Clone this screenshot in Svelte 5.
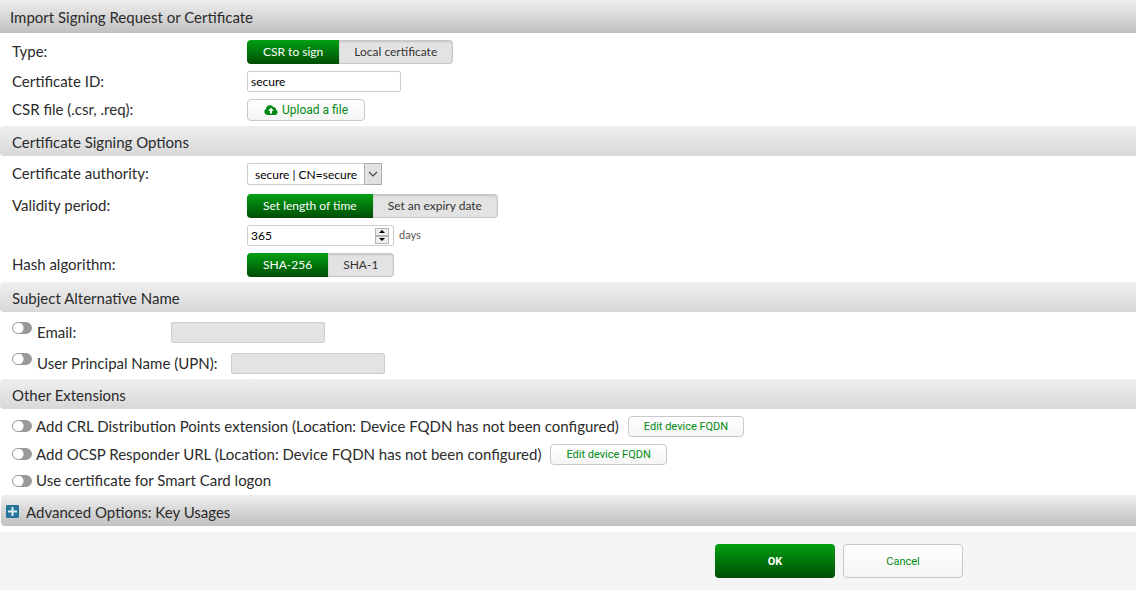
<script lang="ts">
  let type = $state('csr');
  let certId = $state('secure');
  let authority = $state('secure');
  let validity = $state('length');
  let days = $state(365);
  let hash = $state('SHA-256');

  let useEmail = $state(false);
  let useUpn = $state(false);
  let email = $state('');
  let upn = $state('');

  let crl = $state(false);
  let ocsp = $state(false);
  let smartCard = $state(false);
</script>

{#snippet segments(label: string, options: string[][], value: string, pick: (v: string) => void)}
  <div class="segmented" role="group" aria-label={label}>
    {#each options as [key, text]}
      <button type="button" class:active={value === key} aria-pressed={value === key} onclick={() => pick(key)}>
        {text}
      </button>
    {/each}
  </div>
{/snippet}

<form class="page" onsubmit={(e) => e.preventDefault()}>
  <h1 class="bar main">Import Signing Request or Certificate</h1>
  <div class="body">
    <div class="row">
      <span class="name">Type:</span>
      {@render segments('Type', [['csr', 'CSR to sign'], ['local', 'Local certificate']], type, (v) => (type = v))}
    </div>
    <div class="row">
      <label class="name" for="cert-id">Certificate ID:</label>
      <input id="cert-id" class="text" type="text" bind:value={certId} />
    </div>
    <div class="row">
      <span class="name">CSR file (.csr, .req):</span>
      <button type="button" class="plain upload">
        <svg width="14" height="10" viewBox="0 0 14 10" aria-hidden="true">
          <path fill="#008a12" d="M3.3 10A3.2 3.2 0 0 1 2 4 4.1 4.1 0 0 1 9.6 2.2 2.2 2.2 0 0 1 12 4.7 2.8 2.8 0 0 1 11.2 10Z" />
          <path fill="#fff" d="M7 2.8 9.9 5.8H8V8.4H6V5.8H4.1Z" />
        </svg>
        Upload a file
      </button>
    </div>
  </div>

  <h2 class="bar">Certificate Signing Options</h2>
  <div class="body">
    <div class="row tall">
      <label class="name" for="authority">Certificate authority:</label>
      <div class="select">
        <select id="authority" bind:value={authority}>
          <option value="secure">secure | CN=secure</option>
        </select>
        <span class="arrow">
          <svg width="10" height="6" viewBox="0 0 10 6" aria-hidden="true">
            <path fill="none" stroke="#444" stroke-width="1.1" d="M1 1 5 5 9 1" />
          </svg>
        </span>
      </div>
    </div>
    <div class="row">
      <span class="name">Validity period:</span>
      {@render segments('Validity period', [['length', 'Set length of time'], ['date', 'Set an expiry date']], validity, (v) => (validity = v))}
    </div>
    <div class="row">
      <span class="name"></span>
      <div class="number">
        <input id="days" type="number" min="1" bind:value={days} />
        <span class="spinner">
          <button type="button" aria-label="Increase" onclick={() => days++}>
            <svg width="6" height="3" viewBox="0 0 6 3"><path d="M0 3 3 0 6 3Z" /></svg>
          </button>
          <button type="button" aria-label="Decrease" onclick={() => days--}>
            <svg width="6" height="3" viewBox="0 0 6 3"><path d="M0 0H6L3 3Z" /></svg>
          </button>
        </span>
      </div>
      <label class="unit" for="days">days</label>
    </div>
    <div class="row">
      <span class="name">Hash algorithm:</span>
      {@render segments('Hash algorithm', [['SHA-256', 'SHA-256'], ['SHA-1', 'SHA-1']], hash, (v) => (hash = v))}
    </div>
  </div>

  <h2 class="bar">Subject Alternative Name</h2>
  <div class="body san">
    <div class="row">
      <input id="use-email" class="toggle" type="checkbox" bind:checked={useEmail} />
      <label for="use-email">Email:</label>
      <input class="text" type="text" aria-label="Email" disabled={!useEmail} bind:value={email} />
    </div>
    <div class="row">
      <input id="use-upn" class="toggle" type="checkbox" bind:checked={useUpn} />
      <label for="use-upn">User Principal Name (UPN):</label>
      <input class="text" type="text" aria-label="User Principal Name" disabled={!useUpn} bind:value={upn} />
    </div>
  </div>

  <h2 class="bar">Other Extensions</h2>
  <div class="body extensions">
    <div class="row">
      <input id="crl" class="toggle" type="checkbox" bind:checked={crl} />
      <label for="crl">Add CRL Distribution Points extension (Location: Device FQDN has not been configured)</label>
      <button type="button" class="plain edit">Edit device FQDN</button>
    </div>
    <div class="row">
      <input id="ocsp" class="toggle" type="checkbox" bind:checked={ocsp} />
      <label for="ocsp">Add OCSP Responder URL (Location: Device FQDN has not been configured)</label>
      <button type="button" class="plain edit">Edit device FQDN</button>
    </div>
    <div class="row">
      <input id="smart-card" class="toggle" type="checkbox" bind:checked={smartCard} />
      <label for="smart-card">Use certificate for Smart Card logon</label>
    </div>
  </div>

  <h2 class="bar advanced">
    <button type="button" aria-expanded="false">
      <svg width="13" height="13" viewBox="0 0 13 13" aria-hidden="true">
        <rect width="13" height="13" rx="1" fill="#25749a" />
        <path stroke="#e4eef3" stroke-width="2" d="M6.5 2V11M2 6.5H11" />
      </svg>
      Advanced Options: Key Usages
    </button>
  </h2>

  <div class="footer">
    <button type="submit" class="ok">OK</button>
    <button type="button" class="plain cancel">Cancel</button>
  </div>
</form>

<style>
  :global(body) {
    margin: 0;
    background: #fff;
  }

  .page {
    font: 15px/18px Lato, 'Liberation Sans', sans-serif;
    color: #2b2b2b;
  }

  button,
  input,
  select {
    box-sizing: border-box;
    margin: 0;
    font-family: inherit;
  }

  button {
    cursor: pointer;
  }

  .bar {
    box-sizing: border-box;
    margin: 0;
    height: 30px;
    padding: 2px 12px 0;
    display: flex;
    align-items: center;
    font-size: 15px;
    font-weight: 400;
    background: linear-gradient(#efefef, #d8d8d8);
    border-radius: 4px 0 0 4px;
  }

  .bar.main {
    height: 33px;
    padding: 0 10px;
    background: linear-gradient(#efefef, #c0c0c0);
    border-radius: 0;
  }

  .body {
    display: flex;
    flex-direction: column;
    gap: 7px;
    padding: 7px 12px 5px;
  }

  .row {
    display: flex;
    align-items: center;
  }

  .row label,
  .name {
    padding-bottom: 2px;
    line-height: 16px;
  }

  .row.tall {
    height: 24px;
    align-items: flex-start;
  }

  .row.tall .name {
    line-height: 20px;
  }

  .name {
    width: 235px;
    flex: none;
  }

  .segmented {
    display: flex;
    height: 24px;
  }

  .segmented button {
    padding: 0 15px;
    border: 1px solid #c8c8c8;
    border-left: none;
    border-radius: 0 4px 4px 0;
    background: #e3e3e3;
    box-shadow: inset 0 1px 2px rgba(0, 0, 0, 0.15);
    color: #333;
    font-size: 12px;
    line-height: 22px;
  }

  .segmented button:first-child {
    border-left: 1px solid #c8c8c8;
    border-radius: 4px 0 0 4px;
  }

  .segmented button.active {
    padding: 0 16px;
    border: none;
    background: linear-gradient(#02a012, #004d05);
    box-shadow: none;
    color: #fff;
  }

  .text {
    width: 154px;
    height: 21px;
    padding: 0 3px;
    border: 1px solid #ccc;
    border-radius: 2px;
    background: #fff;
    color: #000;
    font-size: 12px;
  }

  .text:disabled {
    background: #e3e3e3;
  }

  .plain {
    border: 1px solid #c8c8c8;
    border-radius: 4px;
    background: linear-gradient(#fff, #f5f5f5);
    color: #008a12;
    font-family: Roboto, sans-serif;
  }

  .upload {
    display: flex;
    align-items: center;
    gap: 4px;
    height: 22px;
    padding: 0 16px;
    font-size: 12px;
  }

  .select {
    position: relative;
    height: 22px;
  }

  .select select {
    appearance: none;
    width: 135px;
    height: 22px;
    padding: 0 20px 0 7px;
    border: 1px solid #ccc;
    border-radius: 2px;
    background: #fff;
    color: #000;
    font-size: 12px;
  }

  .arrow {
    position: absolute;
    top: 0;
    right: 0;
    box-sizing: border-box;
    width: 18px;
    height: 22px;
    display: flex;
    align-items: center;
    justify-content: center;
    border: 1px solid #adadad;
    background: #e1e1e1;
    pointer-events: none;
  }

  .number {
    box-sizing: border-box;
    display: flex;
    align-items: center;
    width: 147px;
    height: 21px;
    padding-right: 4px;
    border: 1px solid #ccc;
    border-radius: 2px;
  }

  .number input {
    appearance: textfield;
    flex: 1;
    min-width: 0;
    height: 19px;
    padding: 0 3px;
    border: none;
    background: none;
    color: #000;
    font-size: 12px;
  }

  .spinner {
    display: flex;
    flex-direction: column;
    width: 14px;
  }

  .spinner button {
    display: flex;
    align-items: center;
    justify-content: center;
    height: 8px;
    padding: 0;
    border: 1px solid #b5b5b5;
    background: #eee;
  }

  .unit {
    margin-left: 5px;
    color: #555;
    font-size: 11px;
  }

  .toggle {
    appearance: none;
    flex: none;
    width: 20px;
    height: 12px;
    border: 1px solid #999;
    border-radius: 6px;
    background: radial-gradient(circle at 5px 5px, #fff 5px, #999 6px);
  }

  .toggle:checked {
    border-color: #008a12;
    background: radial-gradient(circle at 13px 5px, #fff 5px, #008a12 6px);
  }

  .san {
    gap: 10px;
    padding-top: 10px;
  }

  .san .toggle {
    align-self: flex-start;
  }

  .san label {
    min-width: 120px;
    margin: 0 14px 0 5px;
  }

  .extensions .toggle {
    margin-bottom: 1px;
  }

  .extensions label {
    margin-left: 4px;
  }

  .edit {
    height: 21px;
    margin-left: 9px;
    padding: 0 15px;
    font-size: 11px;
  }

  .advanced {
    height: 31px;
    margin-left: 1px;
    padding-left: 5px;
    background: linear-gradient(#efefef, #c0c0c0);
  }

  .advanced button {
    display: flex;
    align-items: center;
    gap: 7px;
    padding: 0;
    border: none;
    background: none;
    color: inherit;
    font-size: 15px;
  }

  .footer {
    display: flex;
    justify-content: flex-end;
    gap: 8px;
    margin-top: 6px;
    padding: 12px 173px 12px 12px;
    background: #f5f5f5;
  }

  .footer button {
    width: 120px;
    height: 34px;
    font-size: 11px;
  }

  .ok {
    border: none;
    border-radius: 4px;
    background: linear-gradient(#02a012, #004d05);
    color: #fff;
    font-family: Roboto, sans-serif;
    font-weight: 700;
  }
</style>
